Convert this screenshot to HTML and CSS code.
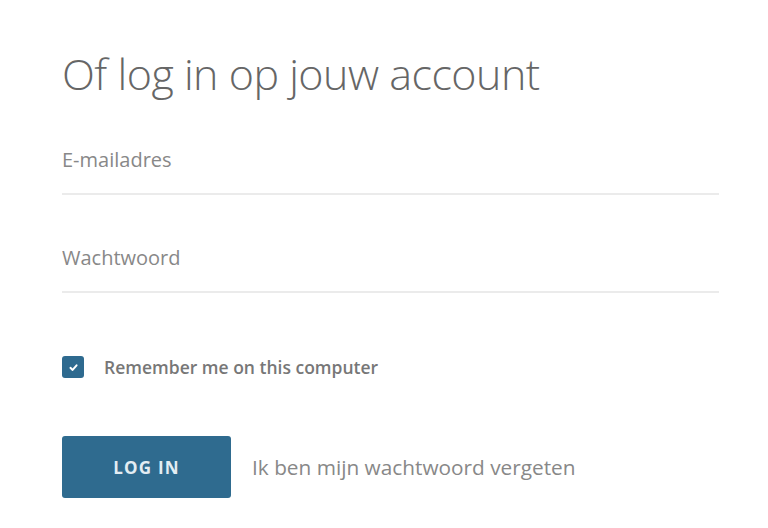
FILE: index.html
```html
<!DOCTYPE html>
<html lang="nl">
<head>
    <meta charset="UTF-8">
    <meta name="viewport" content="width=device-width, initial-scale=1.0">
    <title>Inloggen</title>
    <link rel="stylesheet" href="styles.css">
</head>
<body>

    <div class="login">
        <h1>Of log in op jouw account</h1>

        <form class="form">
            <label class="field">
                <input type="email" placeholder="E-mailadres">
            </label>
            <label class="field">
                <input type="password" placeholder="Wachtwoord">
            </label>

            <label class="remember">
                <span class="check">
                    <svg viewBox="0 0 10 10" width="11" height="11">
                        <path d="M2.2 5.3 L4.2 7.2 L7.8 3" fill="none" stroke="#fff" stroke-width="1.8" stroke-linecap="round" stroke-linejoin="round"/>
                    </svg>
                </span>
                Remember me on this computer
            </label>

            <div class="actions">
                <button type="button" class="submit">LOG IN</button>
                <a href="#" class="forgot">Ik ben mijn wachtwoord vergeten</a>
            </div>
        </form>
    </div>

</body>
</html>
```

FILE: styles.css
```css
body {
    margin: 0;
    font-family: 'Open Sans', sans-serif;
    background: #ffffff;
    color: #666;
}

.login {
    padding: 46px 49px 0 62px;
}

h1 {
    margin: 0;
    font-size: 43px;
    font-weight: 300;
    color: #666;
    letter-spacing: -0.5px;
    line-height: 56px;
}

.form {
    margin-top: 27px;
}

.field {
    display: block;
    border-bottom: 2px solid #ebebeb;
    height: 64px;
    margin-bottom: 32px;
}

.field input {
    width: 100%;
    border: none;
    outline: none;
    padding: 0;
    margin-top: 10px;
    height: 40px;
    font-family: inherit;
    font-size: 20px;
    color: #555;
    background: transparent;
}

.field input::placeholder {
    color: #888;
}

.remember {
    display: flex;
    align-items: center;
    gap: 20px;
    margin-top: 62px;
    font-size: 17.5px;
    font-weight: 600;
    color: #777;
}

.check {
    width: 22px;
    height: 22px;
    border-radius: 3px;
    background: #2e6a8f;
    display: flex;
    align-items: center;
    justify-content: center;
}

.actions {
    display: flex;
    align-items: center;
    gap: 21px;
    margin-top: 57px;
}

.submit {
    width: 169px;
    height: 62px;
    border: none;
    border-radius: 3px;
    background: #2f6b8f;
    color: #e3edf3;
    font-family: inherit;
    font-size: 17px;
    font-weight: 700;
    letter-spacing: 1.2px;
    cursor: pointer;
}

.forgot {
    font-size: 20.8px;
    color: #888;
    text-decoration: none;
}
```
